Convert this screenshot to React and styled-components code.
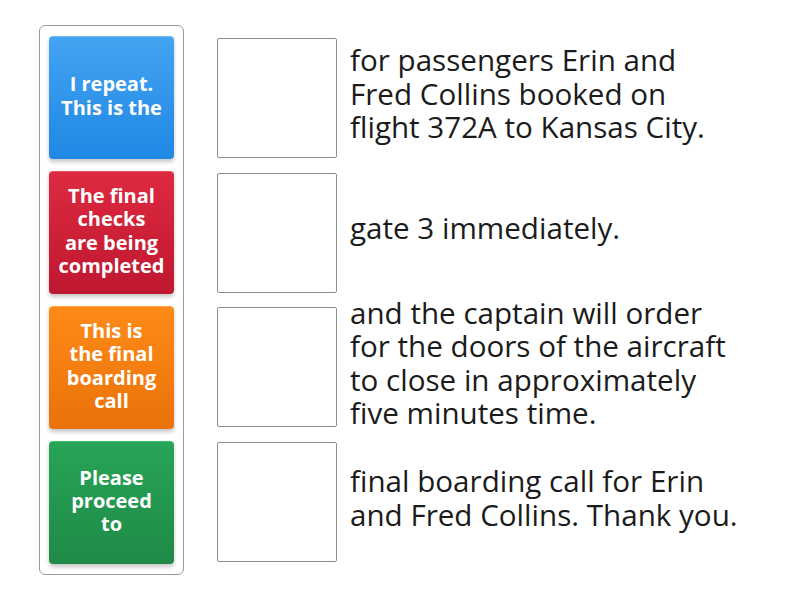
import React from 'react';
import styled, { createGlobalStyle } from 'styled-components';

const GlobalStyle = createGlobalStyle`
  body {
    margin: 0;
    background: #ffffff;
    font-family: 'Open Sans', 'Noto Sans', sans-serif;
  }
`;

const Page = styled.div`
  display: flex;
  align-items: flex-start;
  padding: 25px 0 0 39px;
  gap: 33px;
`;

const CardColumn = styled.div`
  width: 145px;
  height: 550px;
  box-sizing: border-box;
  border: 1px solid #9a9a9a;
  border-radius: 6px;
  padding: 10px 9px;
  display: flex;
  flex-direction: column;
  gap: 12px;
`;

const Card = styled.div`
  height: 123px;
  box-sizing: border-box;
  border-radius: 4px;
  border-top: 1px solid ${p => p.hi};
  background: linear-gradient(to bottom, ${p => p.top}, ${p => p.bottom});
  box-shadow: 0 3px 4px rgba(0, 0, 0, 0.22);
  display: flex;
  flex-direction: column;
  align-items: center;
  justify-content: center;
  padding-bottom: 5px;
  text-align: center;
  color: #fff;
  font-weight: 700;
  font-size: 20px;
  line-height: 23.3px;
  white-space: nowrap;
`;

const Rows = styled.div`
  display: flex;
  flex-direction: column;
  gap: 14.7px;
  padding-top: 13px;
`;

const Row = styled.div`
  display: flex;
  align-items: center;
  height: 120px;
  gap: 13px;
`;

const Slot = styled.div`
  width: 120px;
  height: 120px;
  box-sizing: border-box;
  border: 1px solid #8c8c8c;
  border-radius: 2px;
  flex-shrink: 0;
`;

const Answer = styled.div`
  font-size: 29.6px;
  line-height: 33.5px;
  color: #1b1b1b;
  width: 440px;
  margin-top: -9px;
  white-space: nowrap;
`;

const cards = [
  { lines: ['I repeat.', 'This is the'], top: '#43a3f2', bottom: '#1f88e3', hi: '#6cbcf8' },
  { lines: ['The final', 'checks', 'are being', 'completed'], top: '#dd2a40', bottom: '#bf1730', hi: '#ec5466' },
  { lines: ['This is', 'the final', 'boarding', 'call'], top: '#ff8a17', bottom: '#ea720a', hi: '#ffa648' },
  { lines: ['Please', 'proceed', 'to'], top: '#27a457', bottom: '#1f8a47', hi: '#36c26c' },
];

const answers = [
  ['for passengers Erin and', 'Fred Collins booked on', 'flight 372A to Kansas City.'],
  ['gate 3 immediately.'],
  ['and the captain will order', 'for the doors of the aircraft', 'to close in approximately', 'five minutes time.'],
  ['final boarding call for Erin', 'and Fred Collins. Thank you.'],
];

const App = () => (
  <>
    <GlobalStyle />
    <Page>
      <CardColumn>
        {cards.map((c, i) => (
          <Card key={i} top={c.top} bottom={c.bottom} hi={c.hi}>
            {c.lines.map((l, j) => (
              <div key={j}>{l}</div>
            ))}
          </Card>
        ))}
      </CardColumn>
      <Rows>
        {answers.map((lines, i) => (
          <Row key={i}>
            <Slot />
            <Answer>
              {lines.map((l, j) => (
                <div key={j}>{l}</div>
              ))}
            </Answer>
          </Row>
        ))}
      </Rows>
    </Page>
  </>
);

export default App;
